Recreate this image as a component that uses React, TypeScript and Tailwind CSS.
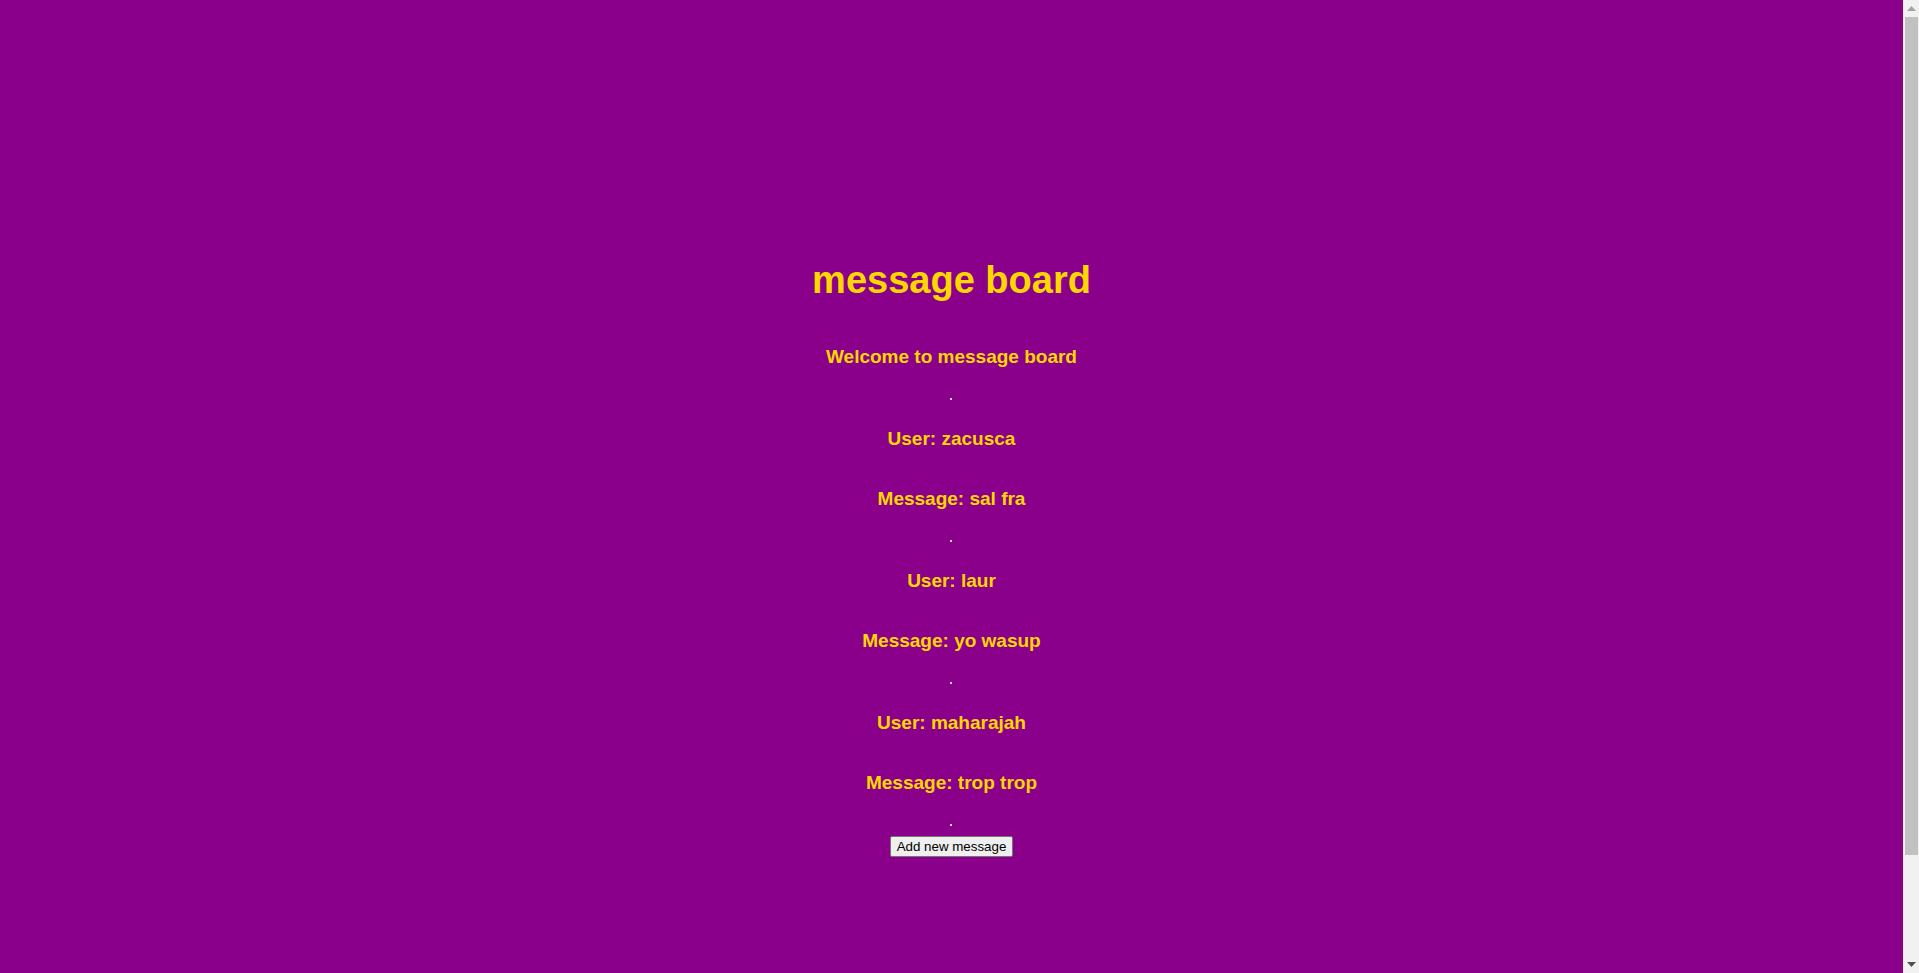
import React from "react";

type Post = {
  user: string;
  message: string;
};

const posts: Post[] = [
  { user: "zacusca", message: "sal fra" },
  { user: "laur", message: "yo wasup" },
  { user: "maharajah", message: "trop trop" },
];

function Dot() {
  return <div className="h-[2px] w-[2px] bg-[#e9d3e9]" />;
}

// browser scrollbar as it shows in the screenshot
function ScrollBar() {
  return (
    <div className="fixed right-0 top-0 flex h-screen w-[16px] flex-col items-center bg-[#f1f1f1]">
      <div className="flex h-[17px] w-full items-center justify-center">
        <svg width="9" height="5" viewBox="0 0 9 5">
          <path d="M0 5 L4.5 0 L9 5 Z" fill="#a3a3a3" />
        </svg>
      </div>
      <div className="h-[838px] w-[13px] self-end mr-[1px] bg-[#c1c1c1]" />
      <div className="flex-1" />
      <div className="flex h-[17px] w-full items-center justify-center">
        <svg width="9" height="5" viewBox="0 0 9 5">
          <path d="M0 0 L9 0 L4.5 5 Z" fill="#505050" />
        </svg>
      </div>
    </div>
  );
}

export default function App() {
  return (
    <main className="min-h-[1090px] w-full bg-[#8b008b] pr-[16px] font-['Liberation_Sans',Arial,sans-serif] text-[#ffd700]">
      <div className="flex flex-col items-center pt-[259px]">
        <h1 className="text-[38px] font-bold leading-[43px]">message board</h1>
        <h3 className="mt-[44px] text-[19px] font-bold leading-[22px]">Welcome to message board</h3>

        <div className="mt-[30px] flex flex-col items-center">
          {posts.map((p) => (
            <div key={p.user} className="flex h-[142px] flex-col items-center">
              <Dot />
              <h3 className="mt-[28px] text-[19px] font-bold leading-[22px]">User: {p.user}</h3>
              <h3 className="mt-[38px] text-[19px] font-bold leading-[22px]">Message: {p.message}</h3>
            </div>
          ))}
          <Dot />
        </div>

        <button
          type="button"
          className="mt-[10px] rounded-[2px] border border-[#767676] bg-[#efefef] px-[6px] py-[1px] text-[13.33px] leading-[17px] text-black hover:bg-[#e5e5e5]"
        >
          Add new message
        </button>
      </div>
      <ScrollBar />
    </main>
  );
}
